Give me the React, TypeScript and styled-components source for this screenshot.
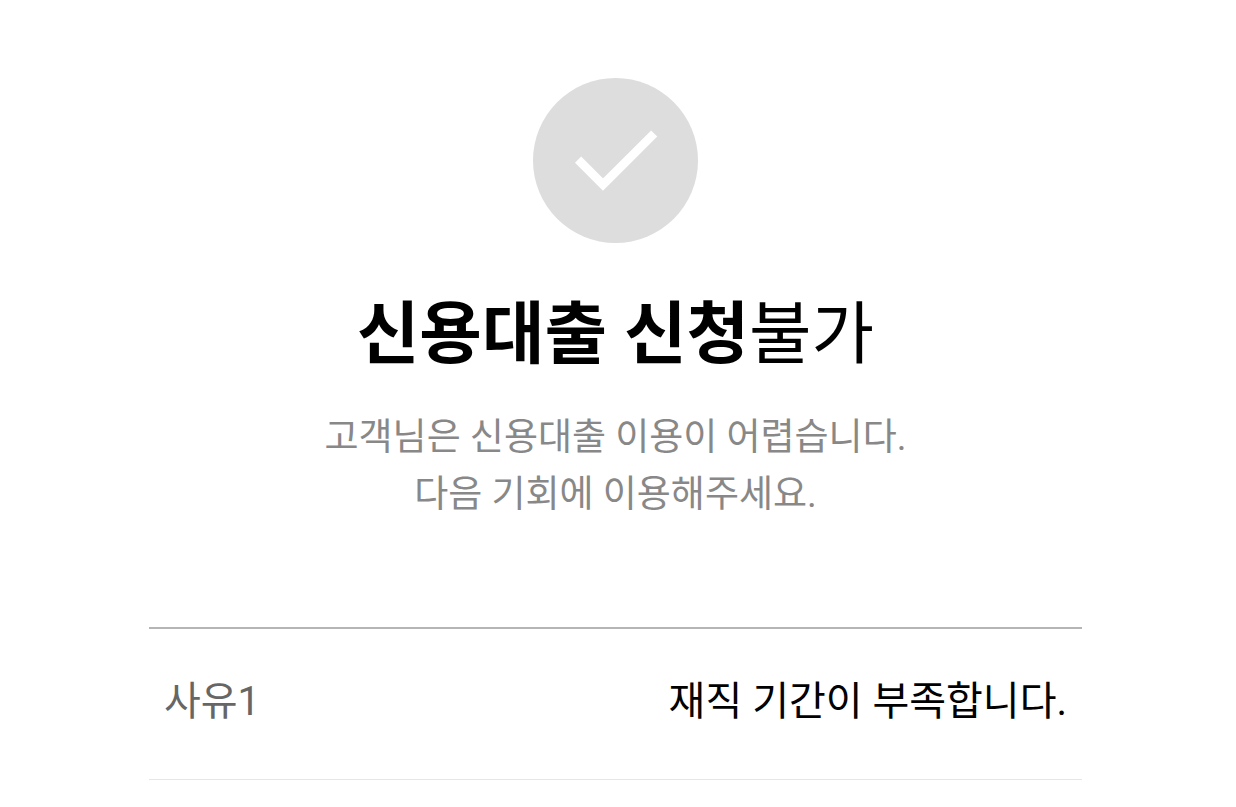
import React from "react";
import styled, { createGlobalStyle } from "styled-components";

const GlobalStyle = createGlobalStyle`
  *, *::before, *::after { box-sizing: border-box; }
  body {
    margin: 0;
    background: #fff;
    color: #000;
    font-family: Roboto, "Noto Sans CJK KR", sans-serif;
  }
`;

const Page = styled.main`
  display: flex;
  flex-direction: column;
  padding: 78px 154px 27px 149px;
`;

const Result = styled.header`
  display: flex;
  flex-direction: column;
  align-items: center;
  text-align: center;
`;

const StatusIcon = styled.svg`
  width: 165px;
  height: 165px;
`;

const Title = styled.h1`
  margin: 42px 0 0;
  font-size: 68px;
  line-height: 100px;
  font-weight: 400;
`;

const Strong = styled.strong`
  font-weight: 700;
`;

const Message = styled.p`
  margin: 24px 0 0;
  font-size: 37px;
  line-height: 57px;
  color: #888;
`;

const Reasons = styled.dl`
  margin: 104px 0 0;
  border-top: 2px solid #b5b5b5;
`;

const Reason = styled.div`
  display: flex;
  align-items: center;
  justify-content: space-between;
  padding: 43px 15px 47px;
  border-bottom: 1px solid #e6e6e6;
  font-size: 40px;
  line-height: 60px;
`;

const Label = styled.dt`
  color: #666;
`;

const Detail = styled.dd`
  margin: 0;
`;

export default function App() {
  return (
    <>
      <GlobalStyle />
      <Page>
        <Result>
          <StatusIcon viewBox="0 0 165 165" aria-hidden="true">
            <circle cx="82.5" cy="82.5" r="82.5" fill="#ddd" />
            <path d="M45.1 81.6 L70 106.5 L121.2 55.5" fill="none" stroke="#fff" strokeWidth="8.8" />
          </StatusIcon>
          <Title>
            <Strong>신용대출 신청</Strong>불가
          </Title>
          <Message>
            고객님은 신용대출 이용이 어렵습니다.
            <br />
            다음 기회에 이용해주세요.
          </Message>
        </Result>
        <Reasons>
          <Reason>
            <Label>사유1</Label>
            <Detail>재직 기간이 부족합니다.</Detail>
          </Reason>
        </Reasons>
      </Page>
    </>
  );
}
